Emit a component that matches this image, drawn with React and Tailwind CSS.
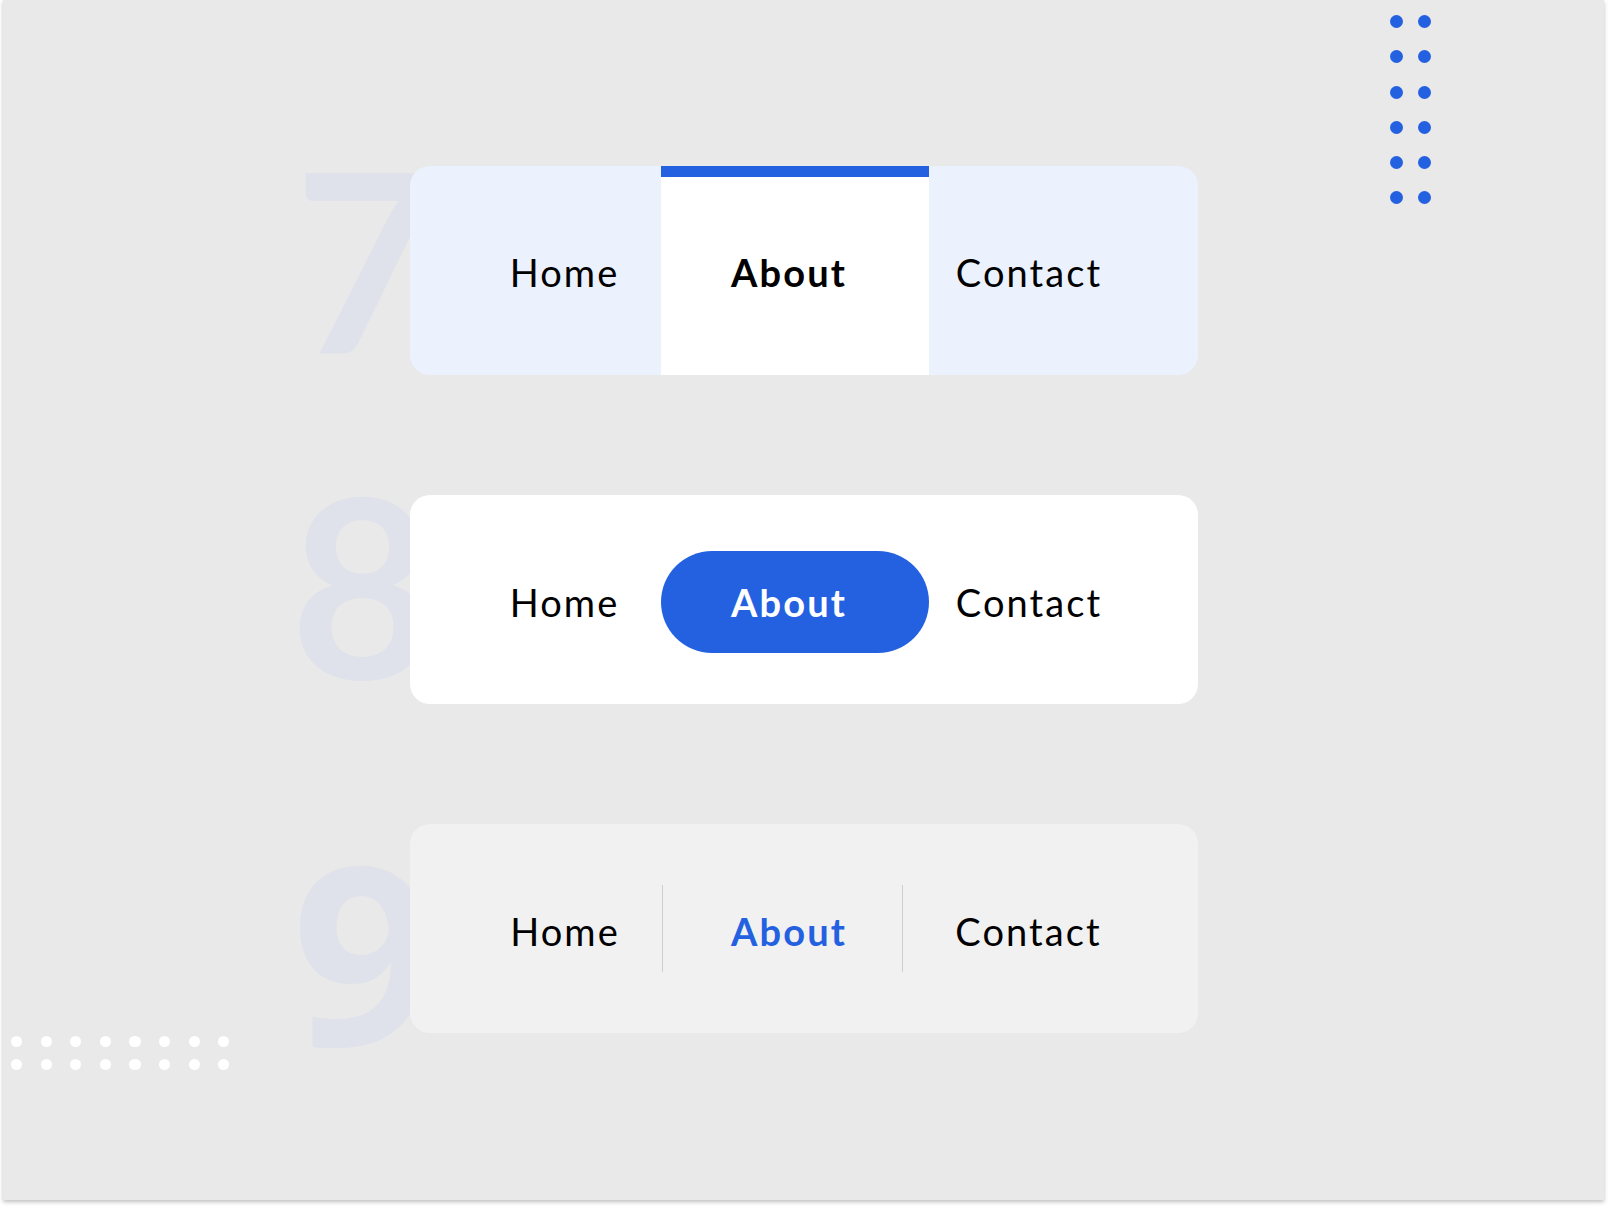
// light digit sitting behind each nav card
function BigNumber({ value, className }) {
  return (
    <span
      className={`pointer-events-none absolute select-none text-[250px] font-bold leading-none text-[#dfe2ea] ${className}`}
    >
      {value}
    </span>
  )
}

function Label({ children, active, tone }) {
  const color = active ? tone : 'text-black'
  return (
    <span
      className={`font-['Lato',sans-serif] text-[38px] leading-none tracking-[0.055em] ${active ? 'font-bold' : 'font-normal'} ${color}`}
    >
      {children}
    </span>
  )
}

// 7: tabs with a top bar on the active item
function TabNav() {
  return (
    <div className="relative z-10 flex h-[209px] w-[788px] overflow-hidden rounded-[20px] bg-[#ebf1fd]">
      <div className="flex w-[251px] items-center justify-center pl-[58px] pt-[2px]">
        <Label>Home</Label>
      </div>
      <div className="flex w-[268px] flex-col bg-white">
        <div className="h-[11px] bg-[#2461e1]" />
        <div className="flex flex-1 items-center justify-center pb-[9px] pr-[12px]">
          <Label active tone="text-black">About</Label>
        </div>
      </div>
      <div className="flex flex-1 items-center justify-center pr-[69px] pt-[2px]">
        <Label>Contact</Label>
      </div>
    </div>
  )
}

// 8: pill highlight
function PillNav() {
  return (
    <div className="relative z-10 flex h-[209px] w-[788px] items-center rounded-[20px] bg-white pt-[5px]">
      <div className="flex w-[251px] items-center justify-center pl-[58px]">
        <Label>Home</Label>
      </div>
      <div className="flex h-[102px] w-[268px] items-center justify-center rounded-full bg-[#2461e1] pr-[12px]">
        <Label active tone="text-white">About</Label>
      </div>
      <div className="flex flex-1 items-center justify-center pr-[69px]">
        <Label>Contact</Label>
      </div>
    </div>
  )
}

// 9: plain links split by thin rules
function DividerNav() {
  return (
    <div className="relative z-10 flex h-[209px] w-[788px] items-center rounded-[20px] bg-[#f1f1f1]">
      <div className="flex w-[252px] items-center justify-center pl-[58px] pt-[4px]">
        <Label>Home</Label>
      </div>
      <div className="h-[87px] w-px bg-[#cfcfcf]" />
      <div className="flex w-[239px] items-center justify-center pl-[13px] pt-[4px]">
        <Label active tone="text-[#2461e1]">About</Label>
      </div>
      <div className="h-[87px] w-px bg-[#cfcfcf]" />
      <div className="flex flex-1 items-center justify-center pr-[44px] pt-[4px]">
        <Label>Contact</Label>
      </div>
    </div>
  )
}

export default function App() {
  return (
    <div className="h-[1208px] w-[1608px] bg-white">
      <div className="relative ml-[3px] h-[1200px] w-[1601px] overflow-hidden bg-[#e9e9e9] shadow-[0_2px_4px_rgba(0,0,0,0.25)]">
        {/* blue dot column, top right */}
        <div className="absolute left-[1387px] top-[15px] grid grid-cols-2 gap-x-[14.6px] gap-y-[22.3px]">
          {Array.from({ length: 12 }).map((_, i) => (
            <span key={i} className="block h-[13px] w-[13px] rounded-full bg-[#2461e1]" />
          ))}
        </div>

        {/* white dots, bottom left */}
        <div className="absolute left-[8px] top-[1036px] grid grid-cols-8 gap-x-[18.3px] gap-y-[11.3px]">
          {Array.from({ length: 16 }).map((_, i) => (
            <span key={i} className="block h-[11.3px] w-[11.3px] rounded-full bg-white" />
          ))}
        </div>

        <div className="flex flex-col gap-[120px] pl-[407px] pt-[166px]">
          <div className="relative">
            <BigNumber value="7" className="-left-[116px] -top-[35px] font-['Lato',sans-serif]" />
            <TabNav />
          </div>
          <div className="relative">
            <BigNumber value="8" className="-left-[120px] -top-[38px] font-['Lato',sans-serif]" />
            <PillNav />
          </div>
          <div className="relative">
            <BigNumber value="9" className="-left-[118px] top-[0px] font-['Open_Sans',sans-serif]" />
            <DividerNav />
          </div>
        </div>
      </div>
    </div>
  )
}
